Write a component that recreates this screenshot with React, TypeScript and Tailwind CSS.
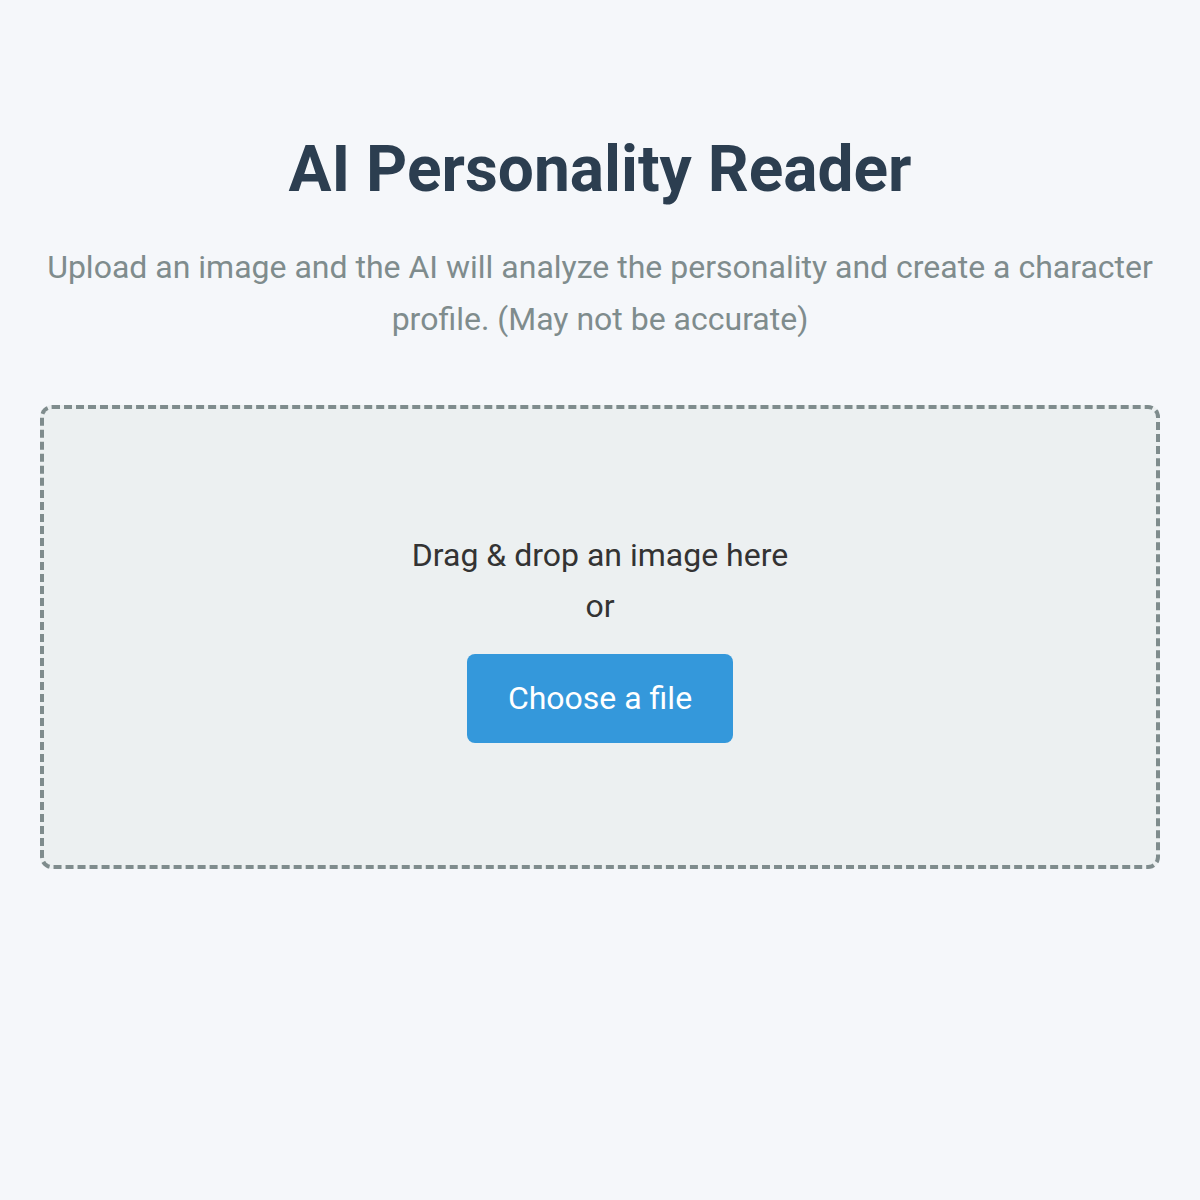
export default function App() {
  return (
    <div
      className="min-h-[1200px] w-full bg-[#f5f7fa] px-10 pt-[132px]"
      style={{ fontFamily: "Roboto, 'Liberation Sans', sans-serif" }}
    >
      <h1 className="text-center text-[64px] font-bold leading-[1.2] text-[#2c3e50]">
        AI Personality Reader
      </h1>
      <p className="mt-8 text-center text-[32px] leading-[52px] text-[#7f8c8d]">
        Upload an image and the AI will analyze the personality and create a character profile. (May not be accurate)
      </p>
      <div className="mt-[60px] flex flex-col items-center rounded-xl border-4 border-dashed border-[#7f8c8d] bg-[#ecf0f1] pt-[121px] pb-[122px]">
        <p className="text-center text-[32px] leading-[51px] text-[#333333]">
          Drag &amp; drop an image here
          <br />
          or
        </p>
        <button
          type="button"
          className="mt-[22px] rounded-lg bg-[#3498db] px-[41px] py-6 text-[32px] leading-[41px] text-white"
        >
          Choose a file
        </button>
      </div>
    </div>
  );
}
